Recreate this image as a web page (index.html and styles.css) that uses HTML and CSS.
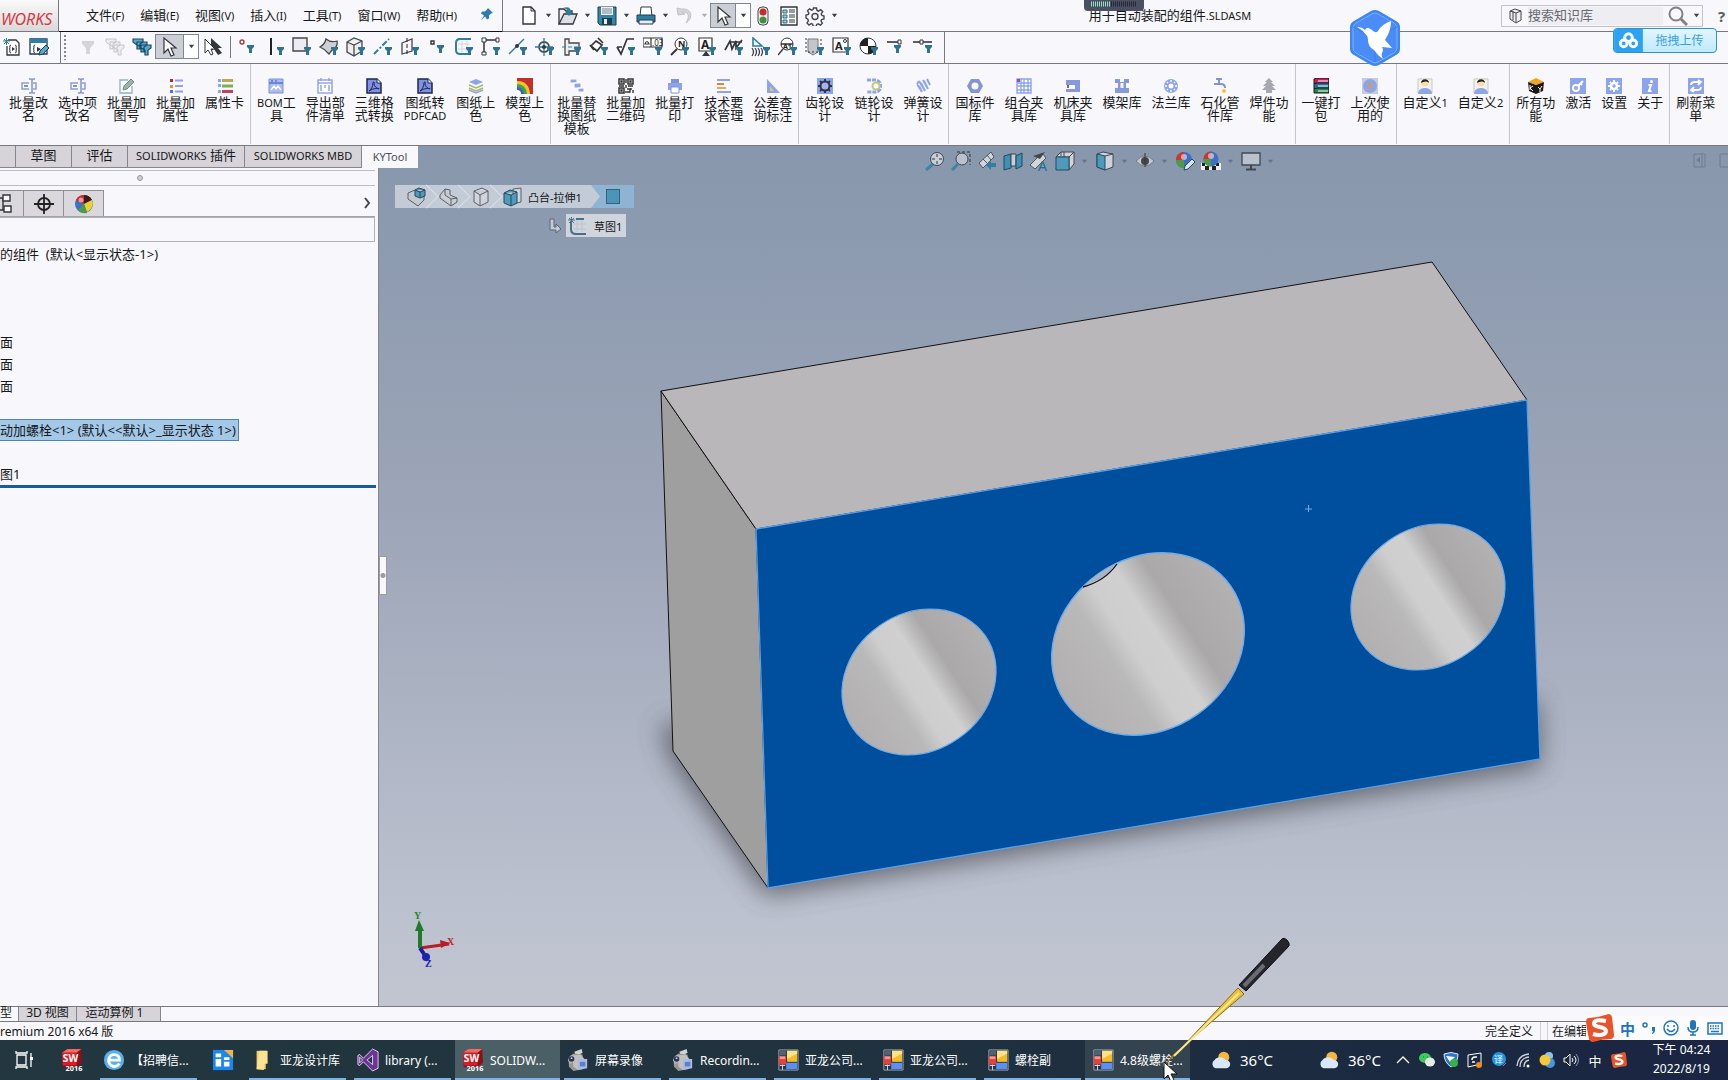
FILE: index.html
```html
<!DOCTYPE html>
<html lang="zh-CN">
<head>
    <meta charset="UTF-8">
    <meta name="viewport" content="width=device-width, initial-scale=1.0">
    <title>用于自动装配的组件.SLDASM</title>
    <link rel="stylesheet" href="styles.css">
</head>
<body>
    <!-- Shared icon shapes -->
    <svg class="sprite" aria-hidden="true">
        <symbol id="funnel" viewBox="0 0 20 20"><path d="M12 10h7v2l-2 2v4h-3v-4l-2-2z" fill="#2f7391"/></symbol>
        <symbol id="caret" viewBox="0 0 8 8"><path d="M1 2h6L4 6z" fill="#3c3f45"/></symbol>
        <symbol id="pointer" viewBox="0 0 20 20"><path d="M5 1v15l4-4 3 7 3-1-3-7h5z" fill="#fff" stroke="#33363b" stroke-width="1.2"/></symbol>
        <symbol id="rename" viewBox="0 0 16 16"><path d="M8 5H1v6h7M12 5h3v6h-3" fill="none" stroke="#8f9fd0" stroke-width="1.5"/><path d="M3 8h4" stroke="#76a877" stroke-width="2"/><path d="M8 1h2l1 1v12l-1 1H8M14 1h-2l-1 1v12l1 1h2" fill="none" stroke="#8095d6" stroke-width="1.5"/></symbol>
        <symbol id="pdf" viewBox="0 0 16 16"><path d="M1 1h10l4 4v10H1z" fill="#7d93e6" stroke="#20264f" stroke-width="1.5"/><path d="M11 1v4h4" fill="#fff" stroke="#20264f"/><path d="M3 13c2-1 4-5 4-8 0-2 2-1 1 1 0 2 3 5 5 5 1-1-6-1-10 2z" fill="none" stroke="#1c2048"/></symbol>
        <symbol id="person" viewBox="0 0 16 16"><path d="M1 1h14v14H1z" fill="#f4f2ef" stroke="#cbc7c0"/><circle cx="8" cy="5" r="3.5" fill="#f4dfae"/><path d="M4 5c0-5 8-5 8 0-2-2-5-2-8 0z" fill="#29231d"/><path d="M1 16c0-8 14-8 14 0z" fill="#8fa5e9"/></symbol>
        <symbol id="gear" viewBox="0 0 20 20"><path d="M8.500 2h3l.5 2.500 1.500.7 2.200-1.500 2 2-1.500 2.200.7 1.600 2.100.5v3l-2.400.5-.6 1.500 1.400 2.200-2 2-2.200-1.400-1.500.6-.5 2.100h-3l-.5-2.300-1.500-.6-2.200 1.400-2-2 1.400-2.200-.6-1.500L1 12v-3l2.300-.5.6-1.500-1.400-2.200 2-2 2.200 1.400 1.400-.6z" fill="none" stroke="#44474d" stroke-width="1.4"/><circle cx="10" cy="10.500" r="3" fill="none" stroke="#44474d" stroke-width="1.4"/></symbol>
        <symbol id="sw" viewBox="0 0 24 24"><path d="M1 4l6-4h15l1 15-6 5H2z" fill="#8c1017"/><path d="M1 4l6-4h15l-5 4z" fill="#f26a64"/><path d="M1 4h16v14H2z" fill="#d81d26"/><text x="2" y="14" font-size="11" font-weight="700" fill="#fff">SW</text><text x="5" y="24" font-size="8" font-weight="700" fill="#fff">2016</text></symbol>
        <symbol id="camera" viewBox="0 0 24 24"><path d="M8 3l8-3 1 4-7 4z" fill="#d5d3d0"/><path d="M2 9l5-4 10 1v16l-10 2-5-5z" fill="#9a9795"/><path d="M6 7l9-1 4 5v8l-7 4-5-4z" fill="#c2c0be"/><path d="M1 12l3-5 4-1-1 8-4 3z" fill="#b5b3b1"/><circle cx="5" cy="11" r="3" fill="#2e3556"/><circle cx="5" cy="10" r="1" fill="#b7cff5"/><path d="M12 11h10v10l-10 2z" fill="#a7bbe8"/><path d="M14 14h6v5h-6z" fill="#5f7fc4"/></symbol>
        <symbol id="blocks" viewBox="0 0 24 24"><path d="M2 1h21v22H2z" fill="#24354d" stroke="#a0a9b5"/><path d="M3 2h7v5H3z" fill="#55606e"/><path d="M11 2h11v12H11z" fill="#f4bd25"/><path d="M11 2h11v3L11 11z" fill="#ffe187"/><path d="M2 8h8v9H2z" fill="#e1423b"/><path d="M3 8h6v3H3z" fill="#f7978d"/><path d="M10 15h12v7H10z" fill="#5b8ff0"/><path d="M3 18h6M6 17v6" stroke="#ddd"/></symbol>
        <symbol id="cloud" viewBox="0 0 24 20"><circle cx="15" cy="7" r="6" fill="#f6b53c"/><path d="M6 19a5 5 0 0 1-1-9 7 6 0 0 1 12 0 4.500 4.500 0 0 1 1 9z" fill="#d9e8f8"/></symbol>
        <symbol id="sogou" viewBox="0 0 28 28"><path d="M3 4q11-1 20-4 2 0 3 3 1 9 2 18 0 3-3 4-9 0-18 3-3 0-4-3Q1 16 0 8q0-4 3-4z" fill="#ea5327"/><path d="M20 7q-11-2-12 2c-1 5 12 3 12 8 0 4-7 5-13 3" fill="none" stroke="#fff" stroke-width="4"/></symbol>
    </svg>

    <!-- Title bar -->
    <header class="title-bar">
        <div class="logo">WORKS</div>
        <nav class="menu">
            <button>文件<small>(F)</small></button>
            <button>编辑<small>(E)</small></button>
            <button>视图<small>(V)</small></button>
            <button>插入<small>(I)</small></button>
            <button>工具<small>(T)</small></button>
            <button>窗口<small>(W)</small></button>
            <button>帮助<small>(H)</small></button>
            <button class="pin" aria-label="固定"><svg class="i16" viewBox="0 0 16 16"><path d="M9 2l5 5-2 .5-2 2 0 3-2 1-2-3-4 4 3-5-3-2 1-2h3l2-2z" fill="#2c7cb0"/></svg></button>
        </nav>
        <div class="quick">
            <button aria-label="新建"><svg class="i20" viewBox="0 0 20 20"><path d="M4 1h8l4 4v13H4z" fill="#fff" stroke="#33363b" stroke-width="1.4"/><path d="M12 1v4h4" fill="none" stroke="#33363b"/></svg></button>
            <button class="caret" aria-label="新建选项"><svg viewBox="0 0 8 8"><use href="#caret"/></svg></button>
            <button aria-label="打开"><svg class="i20" viewBox="0 0 20 20"><path d="M1 18V3h5l2 2h6v4" fill="#eee" stroke="#33363b" stroke-width="1.3"/><path d="M1 18L6 8h13l-4 10z" fill="#dedfe2" stroke="#33363b" stroke-width="1.3"/><path d="M5 2c5-2 8 0 8 4h2l-4 4-4-4h3c0-2-1-3-5-4z" fill="#2d7fa3"/></svg></button>
            <button class="caret" aria-label="打开选项"><svg viewBox="0 0 8 8"><use href="#caret"/></svg></button>
            <button aria-label="保存"><svg class="i20" viewBox="0 0 20 20"><path d="M1 1h18v18H3l-2-2z" fill="#3585a8" stroke="#1e3c50"/><path d="M4 1h12v8H4z" fill="#e9eef1"/><path d="M5 3h10M5 5h10M5 7h10" stroke="#7e8b93"/><path d="M5 12h10v7H5z" fill="#1e3c50"/><path d="M7 13h3v5H7z" fill="#e9eef1"/></svg></button>
            <button class="caret" aria-label="保存选项"><svg viewBox="0 0 8 8"><use href="#caret"/></svg></button>
            <button aria-label="打印"><svg class="i20" viewBox="0 0 20 20"><path d="M5 1h10l1 9H4z" fill="#fff" stroke="#33363b"/><path d="M1 9h18v7H1z" fill="#2d7fa3" stroke="#1e3c50"/><path d="M3 14h14v4H3z" fill="#e8eef1" stroke="#1e3c50"/></svg></button>
            <button class="caret" aria-label="打印选项"><svg viewBox="0 0 8 8"><use href="#caret"/></svg></button>
            <button aria-label="撤消"><svg class="i20" viewBox="0 0 20 20"><path d="M2 2l1 7 7-1-3-2c5-1 9 3 4 11 8-6 6-15-5-14z" fill="#d5d4d9" stroke="#c2c1c7"/></svg></button>
            <button class="caret faded" aria-label="撤消选项"><svg viewBox="0 0 8 8"><use href="#caret"/></svg></button>
            <div class="split">
                <button class="on" aria-label="选择"><svg class="i20"><use href="#pointer"/></svg></button>
                <button class="caret" aria-label="选择选项"><svg viewBox="0 0 8 8"><use href="#caret"/></svg></button>
            </div>
            <button class="spaced" aria-label="重建模型"><svg class="i20" viewBox="0 0 20 20"><rect x="5" y="1" width="10" height="18" rx="4" fill="#eee" stroke="#44474d"/><circle cx="10" cy="6" r="3.500" fill="#c72a2a"/><circle cx="10" cy="14" r="3.500" fill="#3c9040"/></svg></button>
            <button class="spaced" aria-label="文件属性"><svg class="i20" viewBox="0 0 20 20"><path d="M2 1h16v18H2z" fill="#fff" stroke="#33363b" stroke-width="1.4"/><path d="M4 4h4v3H4zM4 9h4v3H4zM4 14h4v3H4z" fill="#9cc9dd" stroke="#2d6a8a"/><path d="M10 4h6M10 6h6M10 9h6M10 11h6M10 14h6M10 16h6" stroke="#33363b"/></svg></button>
            <button aria-label="选项"><svg class="i20"><use href="#gear"/></svg></button>
            <button class="caret" aria-label="更多选项"><svg viewBox="0 0 8 8"><use href="#caret"/></svg></button>
        </div>
        <div class="doc-name">用于自动装配的组件<small>.SLDASM</small></div>
        <div class="search">
            <svg class="i16" viewBox="0 0 16 16"><path d="M3 3l5-2 6 2v9l-5 3-6-4z" fill="#eee" stroke="#44474d"/><path d="M6 3v9M9 5v9M3 3l6 2 5-2" fill="none" stroke="#44474d"/></svg>
            <input type="text" aria-label="搜索知识库" placeholder="搜索知识库">
            <button aria-label="搜索"><svg class="i20" viewBox="0 0 20 20"><circle cx="8" cy="8" r="6.500" fill="none" stroke="#808287" stroke-width="2"/><path d="M13 13l6 6" stroke="#808287" stroke-width="3"/></svg></button>
            <button class="caret" aria-label="搜索范围"><svg viewBox="0 0 8 8"><use href="#caret"/></svg></button>
        </div>
        <button class="help">?</button>
    </header>

    <!-- Selection filter toolbar -->
    <div class="filter-bar">
        <div class="macro">
            <button aria-label="新建宏"><svg class="i20" viewBox="0 0 20 20"><path d="M6 3h8l3 3v12H5V9" fill="#fff" stroke="#33363b" stroke-width="1.3"/><path d="M1 4h7M4.500 1v7M2 2l5 5M7 2L2 7" stroke="#2d7fa3"/><path d="M9 8q-2 0-1 3 0 1-1 1 1 0 1 1-1 3 1 3M13 8q2 0 1 3 0 1 1 1-1 0-1 1 1 3-1 3" fill="none" stroke="#33363b"/><path d="M10 10l3 2-3 2z" fill="#33363b"/></svg></button>
            <button aria-label="编辑宏"><svg class="i20" viewBox="0 0 20 20"><path d="M1 2h17v15H1z" fill="#fff" stroke="#1e3c50" stroke-width="1.300"/><path d="M1 2h17v4H1z" fill="#2d7fa3"/><path d="M6 8q-2 0-1 3 0 1-1 1 1 0 1 1-1 3 1 3" fill="none" stroke="#33363b"/><path d="M8 10l4 2-4 3z" fill="#33363b"/><path d="M10 18l1-4 6-6 3 3-6 6z" fill="#5aa7cb" stroke="#1e3c50"/></svg></button>
        </div>
        <div class="filters">
            <span class="grip"></span>
            <button aria-label="清除过滤"><svg class="i20" viewBox="0 0 20 20"><path d="M4 4h12v3l-4 4v6H8v-6L4 7z" fill="#d5d4d9"/></svg></button>
            <button aria-label="全部过滤"><svg class="i20" viewBox="0 0 20 20"><path d="M1 2h10v3l-3 2v5H5V8L1 5zM5 5h10v3l-3 2v5H9v-5L5 8zM9 8h10v3l-3 2v5h-3v-5l-4-2z" fill="#eeedf1" stroke="#c6c5cb"/></svg></button>
            <button aria-label="过滤器"><svg class="i20" viewBox="0 0 20 20"><path d="M1 2h10v3l-3 2v5H5V8L1 5zM5 5h10v3l-3 2v5H9v-5L5 8zM9 8h10v3l-3 2v5h-3v-5l-4-2z" fill="#55a9cb" stroke="#1b4a63" stroke-width="1.200"/></svg></button>
            <div class="split">
                <button class="on" aria-label="选择"><svg class="i20"><use href="#pointer"/></svg></button>
                <button class="caret" aria-label="选择选项"><svg viewBox="0 0 8 8"><use href="#caret"/></svg></button>
            </div>
            <button aria-label="反向选择"><svg class="i20" viewBox="0 0 20 20"><path d="M8 1v13l3-2 4 6 4-2-4-5h4z" fill="#33363b"/><path d="M2 2v14l3-3 3 5 2-1-2-5h4z" fill="#fff" stroke="#33363b"/></svg></button>
            <span class="divider"></span>
            <button aria-label="过滤顶点"><svg class="i20" viewBox="0 0 20 20"><circle cx="4" cy="5" r="2" fill="#fff" stroke="#a3403c" stroke-width="1.400"/><use href="#funnel" x="-3" y="-2" width="20" height="20"/></svg></button>
            <button aria-label="过滤边线"><svg class="i20" viewBox="0 0 20 20"><path d="M6 1v17" stroke="#222" stroke-width="2"/><use href="#funnel" width="20" height="20"/></svg></button>
            <button aria-label="过滤面"><svg class="i20" viewBox="0 0 20 20"><path d="M1 1h14v13H1z" fill="#ecebef" stroke="#44474d" stroke-width="1.400"/><use href="#funnel" width="20" height="20"/></svg></button>
            <button aria-label="过滤曲面"><svg class="i20" viewBox="0 0 20 20"><path d="M1 10q5-3 6-8 5 4 11 2 1 6-4 8-2 2-4 5-4-5-9-7z" fill="#cfd0d4" stroke="#44474d" stroke-width="1.300"/><use href="#funnel" width="20" height="20"/></svg></button>
            <button aria-label="过滤实体"><svg class="i20" viewBox="0 0 20 20"><path d="M1 5l7-4 8 3v10l-8 5-7-4zM1 5l7 3 8-4M8 8v11" fill="#eee" stroke="#44474d" stroke-width="1.300"/><use href="#funnel" width="20" height="20"/></svg></button>
            <button aria-label="过滤基准轴"><svg class="i20" viewBox="0 0 20 20"><path d="M1 17L16 2" stroke="#2d7fa3" stroke-width="2" stroke-dasharray="6 2 2 2"/><use href="#funnel" width="20" height="20"/></svg></button>
            <button aria-label="过滤基准面"><svg class="i20" viewBox="0 0 20 20"><path d="M2 6l10-4v12L2 17z" fill="none" stroke="#44474d" stroke-width="1.300"/><path d="M7 1v18" stroke="#222" stroke-dasharray="4 2"/><use href="#funnel" width="20" height="20"/></svg></button>
            <button aria-label="过滤草图点"><svg class="i20" viewBox="0 0 20 20"><path d="M4 4h3v3H4z" fill="#fff" stroke="#33363b" stroke-width="1.400"/><use href="#funnel" x="-2" y="-2" width="20" height="20"/></svg></button>
            <button aria-label="过滤草图"><svg class="i20" viewBox="0 0 20 20"><path d="M17 2H6q-4 0-4 4v7q0 4 4 4h8" fill="none" stroke="#2d7fa3" stroke-width="2"/><path d="M4 7h12M4 12h12M8 4v12M13 4v12" stroke="#d4d7dd"/><use href="#funnel" width="20" height="20"/></svg></button>
            <button aria-label="过滤草图线段"><svg class="i20" viewBox="0 0 20 20"><path d="M3 17V3h14" fill="none" stroke="#33363b" stroke-width="1.500"/><path d="M1 15h4v3H1zM1 1h4v4H1zM15 1h3v4h-3z" fill="#fff" stroke="#33363b"/><use href="#funnel" width="20" height="20"/></svg></button>
            <button aria-label="过滤中点"><svg class="i20" viewBox="0 0 20 20"><path d="M1 17L16 2" stroke="#2d7fa3" stroke-width="1.500"/><circle cx="9" cy="9" r="2" fill="#33363b"/><use href="#funnel" width="20" height="20"/></svg></button>
            <button aria-label="过滤中心符号线"><svg class="i20" viewBox="0 0 20 20"><circle cx="9" cy="10" r="5" fill="none" stroke="#44474d" stroke-width="1.800"/><path d="M9 1v18M0 10h18" stroke="#2d7fa3" stroke-width="1.300"/><circle cx="9" cy="10" r="2" fill="#33363b"/><use href="#funnel" width="20" height="20"/></svg></button>
            <button aria-label="过滤中心线"><svg class="i20" viewBox="0 0 20 20"><path d="M3 2h4v4h10v8H7v4H3z" fill="#eee" stroke="#44474d" stroke-width="1.300"/><path d="M0 10h19" stroke="#2d7fa3" stroke-dasharray="4 2"/><use href="#funnel" width="20" height="20"/></svg></button>
            <button aria-label="过滤尺寸"><svg class="i20" viewBox="0 0 20 20"><path d="M7 4l6 4-5 6-6-5zM1 8l4 5M9 1l5 5" fill="#fff" stroke="#33363b" stroke-width="1.700"/><use href="#funnel" width="20" height="20"/></svg></button>
            <button aria-label="过滤表面粗糙度"><svg class="i20" viewBox="0 0 20 20"><path d="M1 10h5M1 10l4 7 6-15h7" fill="none" stroke="#33363b" stroke-width="1.700"/><use href="#funnel" width="20" height="20"/></svg></button>
            <button aria-label="过滤形位公差"><svg class="i20" viewBox="0 0 20 20"><path d="M0 1h19v9H0zM8 1v9M2 7q2-5 4 0z" fill="#fff" stroke="#33363b" stroke-width="1.200"/><text x="9" y="9" font-size="8" fill="#222">.03</text><use href="#funnel" width="20" height="20"/></svg></button>
            <button aria-label="过滤零件序号"><svg class="i20" viewBox="0 0 20 20"><circle cx="11" cy="7" r="6" fill="#fff" stroke="#33363b"/><path d="M7 12l-6 6" stroke="#33363b" stroke-width="2"/><text x="8" y="10" font-size="9" font-weight="700" fill="#222">N</text><use href="#funnel" width="20" height="20"/></svg></button>
            <button aria-label="过滤注释"><svg class="i20" viewBox="0 0 20 20"><path d="M2 1h13v13H2z" fill="#fff" stroke="#33363b" stroke-width="1.200"/><path d="M5 19l4-5 4 5z" fill="#33363b"/><text x="4" y="12" font-size="12" font-weight="700" fill="#222">A</text><use href="#funnel" width="20" height="20"/></svg></button>
            <button aria-label="过滤焊接符号"><svg class="i20" viewBox="0 0 20 20"><path d="M1 13l5-9 2 8 4-8v7l6-8M5 5h13" fill="none" stroke="#33363b" stroke-width="1.700"/><use href="#funnel" width="20" height="20"/></svg></button>
            <button aria-label="过滤焊缝"><svg class="i20" viewBox="0 0 20 20"><path d="M2 1v8h9z" fill="none" stroke="#2d7fa3" stroke-width="1.600"/><path d="M1 11q3 4 0 8M4 11q3 4 0 8M7 11q3 4 0 8M10 11q3 4 0 8" fill="none" stroke="#33363b" stroke-width="1.200"/><use href="#funnel" width="20" height="20"/></svg></button>
            <button aria-label="过滤基准目标"><svg class="i20" viewBox="0 0 20 20"><circle cx="9" cy="7" r="6" fill="#fff" stroke="#33363b"/><path d="M3 7h12M5 12l-5 6" stroke="#33363b" stroke-width="1.400"/><text x="5" y="12" font-size="7" font-weight="700" fill="#222">A1</text><use href="#funnel" width="20" height="20"/></svg></button>
            <button aria-label="过滤装饰螺纹线"><svg class="i20" viewBox="0 0 20 20"><path d="M3 2h10v13l-5 3-5-3z" fill="#c4c5ca" stroke="#777a80"/><path d="M1 1v14h15V1" fill="none" stroke="#33363b" stroke-dasharray="2 2"/><use href="#funnel" width="20" height="20"/></svg></button>
            <button aria-label="过滤块"><svg class="i20" viewBox="0 0 20 20"><path d="M1 1h15v14H1z" fill="#fff" stroke="#33363b" stroke-width="1.200"/><text x="3" y="13" font-size="11" font-weight="700" fill="#222">A</text><circle cx="13" cy="4" r="1.500" fill="none" stroke="#33363b"/><use href="#funnel" width="20" height="20"/></svg></button>
            <button aria-label="过滤质心"><svg class="i20" viewBox="0 0 20 20"><circle cx="9" cy="9" r="8" fill="#fff" stroke="#33363b"/><path d="M9 9V1a8 8 0 0 0-8 8zM9 9v8a8 8 0 0 0 8-8z" fill="#222"/><use href="#funnel" width="20" height="20"/></svg></button>
            <button aria-label="过滤连接点"><svg class="i20" viewBox="0 0 20 20"><path d="M1 5h12" stroke="#33363b" stroke-width="1.600"/><path d="M12 3h3v4h-3z" fill="#fff" stroke="#33363b"/><use href="#funnel" x="-4" y="-2" width="20" height="20"/></svg></button>
            <button aria-label="过滤步路点"><svg class="i20" viewBox="0 0 20 20"><path d="M0 5h19" stroke="#33363b" stroke-width="1.600"/><path d="M7 3h3v4H7z" fill="#fff" stroke="#33363b"/><use href="#funnel" y="-2" width="20" height="20"/></svg></button>
        </div>
    </div>

    <!-- KYTool ribbon -->
    <div class="ribbon">
        <div class="group">
            <button><svg class="i16"><use href="#rename"/></svg>批量改<br>名</button>
            <button><svg class="i16"><use href="#rename"/></svg>选中项<br>改名</button>
            <button><svg class="i16" viewBox="0 0 16 16"><path d="M9 2H1v13h12V8" fill="#fff" stroke="#8ab2cf" stroke-width="1.300"/><path d="M4 12l1-4 7-7 3 3-7 7z" fill="#9db4a6" stroke="#6f8b80"/></svg>批量加<br>图号</button>
            <button><svg class="i16" viewBox="0 0 16 16"><path d="M2 1h3v3H2z" fill="#b42b2b"/><path d="M2 7h3v3H2z" fill="#e0952c"/><path d="M2 12h3v3H2z" fill="#5272d6"/><path d="M7 2.500h8M7 8h8M7 13.500h8" stroke="#8ea4ea" stroke-width="2"/></svg>批量加<br>属性</button>
            <button><svg class="i16" viewBox="0 0 16 16"><path d="M1 1h3v3H1zM1 6h3v3H1zM1 12h3v3H1z" fill="#8ea4ea"/><path d="M5 2.500h11" stroke="#b3aa52" stroke-width="3"/><path d="M5 8h11" stroke="#7fae55" stroke-width="3"/><path d="M5 13.500h11" stroke="#c0405d" stroke-width="3"/></svg>属性卡</button>
        </div>
        <div class="group">
            <button><svg class="i16" viewBox="0 0 16 16"><path d="M1 1h14v14H1z" fill="#a8bbf2" stroke="#7d93de"/><path d="M1 5h14M3 3h2M7 3h2" stroke="#5e77cf" stroke-width="1.500"/><path d="M3 12l3-4 2 3 2-3 3 4" fill="none" stroke="#fff" stroke-width="1.500"/></svg><span><small>BOM</small>工</span>具</button>
            <button><svg class="i16" viewBox="0 0 16 16"><path d="M1 2h14v13H1zM1 5h14" fill="#fff" stroke="#93a6e6" stroke-width="1.500"/><path d="M4 7v6M8 7v3M12 7v6M4 0v3M12 0v3" stroke="#93a6e6" stroke-width="1.500"/></svg>导出部<br>件清单</button>
            <button><svg class="i16"><use href="#pdf"/></svg>三维格<br>式转换</button>
            <button><svg class="i16"><use href="#pdf"/></svg>图纸转<small>PDFCAD</small></button>
            <button><svg class="i16" viewBox="0 0 16 16"><path d="M8 1l7 3-7 3-7-3z" fill="#8ea4ea"/><path d="M1 7l7 3 7-3M1 10l7 3 7-3" fill="none" stroke="#a7b66c" stroke-width="1.600"/><path d="M1 12l7 3 7-3" fill="none" stroke="#8ea4ea" stroke-width="1.600"/></svg>图纸上<br>色</button>
            <button><svg class="i16" viewBox="0 0 16 16"><path d="M0 0h16v16H0z" fill="#c3302b"/><path d="M0 3q12 0 13 13H0z" fill="#f0c52b"/><path d="M0 6q9 0 10 10H0z" fill="#43a343"/><path d="M0 9q6 0 7 7H0z" fill="#3865c4"/><path d="M0 12q4 0 4 4H0z" fill="#fff"/></svg>模型上<br>色</button>
        </div>
        <div class="group">
            <button><svg class="i16" viewBox="0 0 16 16"><path d="M1 1h7v4H1zM5 5h7v5H5zM9 10h6v4H9z" fill="#8ea4ea" stroke="#fff"/></svg>批量替<br>换图纸<br>模板</button>
            <button><svg class="i16" viewBox="0 0 16 16"><path d="M1 1h5v5H1zM10 1h5v5h-5zM1 10h5v5H1z" fill="none" stroke="#333" stroke-width="1.500"/><path d="M3 3h1v1H3zM12 3h1v1h-1zM3 12h1v1H3zM8 1v4M8 7v3M1 8h5M10 8h5M9 11h3v3H9M13 10v2M15 12v3M8 13v2" fill="none" stroke="#333" stroke-width="1.400"/></svg>批量加<br>二维码</button>
            <button><svg class="i16" viewBox="0 0 16 16"><path d="M4 1h8v4H4z" fill="#7f94d8"/><path d="M1 5h14v7H1z" fill="#8ea4ea"/><path d="M4 9h8v6H4z" fill="#fff" stroke="#7f94d8"/></svg>批量打<br>印</button>
            <button><svg class="i16" viewBox="0 0 16 16"><path d="M1 2h13" stroke="#8ea4ea" stroke-width="2"/><path d="M1 6h7" stroke="#d98532" stroke-width="2"/><path d="M1 10h9" stroke="#e0b042" stroke-width="2"/><path d="M1 14h14" stroke="#8ea4ea" stroke-width="2"/></svg>技术要<br>求管理</button>
            <button><svg class="i16" viewBox="0 0 16 16"><path d="M2 1l13 14H2z" fill="#8ea4ea"/><path d="M5 8l4 5H5z" fill="#d9cb63"/></svg>公差查<br>询标注</button>
        </div>
        <div class="group">
            <button><svg class="i16" viewBox="0 0 16 16"><path d="M0 0h16v16H0z" fill="#8ea4ea"/><circle cx="8" cy="8" r="4.500" fill="#a5b6ee" stroke="#2f3344" stroke-width="2"/><path d="M8 1v3M8 12v3M1 8h3M12 8h3M3 3l2 2M11 11l2 2M13 3l-2 2M3 13l2-2" stroke="#2f3344" stroke-width="1.800"/></svg>齿轮设<br>计</button>
            <button><svg class="i16" viewBox="0 0 16 16"><path d="M1 2h8a6 6 0 0 1 0 12H1" fill="none" stroke="#8ea4ea" stroke-width="3" stroke-dasharray="4 1"/><circle cx="10" cy="8" r="3.500" fill="#fff" stroke="#c1c77d" stroke-width="2"/></svg>链轮设<br>计</button>
            <button><svg class="i16" viewBox="0 0 16 16"><path d="M2 6l5 8M4 3l6 10M8 2l5 9M12 1l3 6M2 6l2-3M7 14l-3-6M10 13L6 5M13 11L9 3" fill="none" stroke="#8ea4ea" stroke-width="2"/></svg>弹簧设<br>计</button>
        </div>
        <div class="group">
            <button><svg class="i16" viewBox="0 0 16 16"><path d="M4 1h8l4 7-4 7H4L0 8z" fill="#8595cf"/><circle cx="8" cy="8" r="3.500" fill="#f8f7fb"/></svg>国标件<br>库</button>
            <button><svg class="i16" viewBox="0 0 16 16"><path d="M1 1h14v14H1zM5 1v14M8 1v14M12 1v14M1 5h14M1 8h14M1 12h14" fill="#fff" stroke="#8ea4ea" stroke-width="1.400"/><path d="M1 1h3v3H1z" fill="#9a4ea8"/></svg>组合夹<br>具库</button>
            <button><svg class="i16" viewBox="0 0 16 16"><path d="M1 2h14v12H1v-3h9V7H1z" fill="#8699dc"/><path d="M3 7v3" stroke="#b64f4f" stroke-width="2"/></svg>机床夹<br>具库</button>
            <button><svg class="i16" viewBox="0 0 16 16"><path d="M1 1h5v3h4V1h5v4h-3v5h3v5H1v-5h3V5H1z" fill="#8699dc"/><path d="M8 5v5" stroke="#f8f7fb" stroke-width="3"/></svg>模架库</button>
            <button><svg class="i16" viewBox="0 0 16 16"><circle cx="8" cy="8" r="7" fill="#8ea4ea"/><circle cx="8" cy="8" r="2.500" fill="#fff"/><path d="M8 2v2M8 12v2M2 8h2M12 8h2M4 4l1 1M11 11l1 1M12 4l-1 1M4 12l1-1" stroke="#fff" stroke-width="1.400"/></svg>法兰库</button>
            <button><svg class="i16" viewBox="0 0 16 16"><path d="M4 1h6M7 1v4M2 6h7q4 0 4 4" fill="none" stroke="#7f94d8" stroke-width="2"/><circle cx="12" cy="13" r="2" fill="#e6ce3c"/></svg>石化管<br>件库</button>
            <button><svg class="i16" viewBox="0 0 16 16"><path d="M8 0l4 4h-2l4 4h-3l4 4h-4v3H5v-3H1l4-4H2l4-4H4z" fill="#a6a9b2"/></svg>焊件功<br>能</button>
        </div>
        <div class="group">
            <button><svg class="i16" viewBox="0 0 16 16"><path d="M1 1l3-1h12v5l-2 1H1z" fill="#c0215e" stroke="#2b1111"/><path d="M1 6l3-1h12v5l-2 1H1z" fill="#2670a5" stroke="#101c2b"/><path d="M1 11l3-1h12v5H1z" fill="#27824c" stroke="#0e2015"/><path d="M5 3h10M5 8h10M5 13h10" stroke="#fff"/></svg>一键打<br>包</button>
            <button><svg class="i16" viewBox="0 0 16 16"><path d="M0 0h16v16H0z" fill="#c5ccdf"/><circle cx="8" cy="8" r="7" fill="#8ea4ea"/><path d="M8 4v8" stroke="#e39a3c" stroke-width="2"/></svg>上次使<br>用的</button>
        </div>
        <div class="group">
            <button><svg class="i16"><use href="#person"/></svg><span>自定义<small>1</small></span></button>
            <button><svg class="i16"><use href="#person"/></svg><span>自定义<small>2</small></span></button>
        </div>
        <div class="group">
            <button><svg class="i16" viewBox="0 0 16 16"><path d="M0 4l8-4 8 4-8 3z" fill="#f2a31f"/><path d="M0 4l8 3v9l-7-3zM16 4L8 7v9l7-3z" fill="#1c1712"/><path d="M2 7v5M5 8l-3 2 3 3M10 9l2 2 2-3M12 11v3" fill="none" stroke="#fff"/></svg>所有功<br>能</button>
            <button><svg class="i16" viewBox="0 0 16 16"><path d="M0 0h16v16H0z" fill="#8ea4ea"/><circle cx="6" cy="10" r="3" fill="none" stroke="#fff" stroke-width="2"/><path d="M8 8l5-5M10 5l2 2" stroke="#fff" stroke-width="2"/></svg>激活</button>
            <button><svg class="i16" viewBox="0 0 16 16"><path d="M0 0h16v16H0z" fill="#8ea4ea"/><circle cx="8" cy="8" r="3" fill="none" stroke="#fff" stroke-width="2.500"/><path d="M8 2v2M8 12v2M2 8h2M12 8h2M4 4l1 1M11 11l1 1M12 4l-1 1M4 12l1-1" stroke="#fff" stroke-width="2"/></svg>设置</button>
            <button><svg class="i16" viewBox="0 0 16 16"><path d="M0 0h16v16H0z" fill="#8ea4ea"/><circle cx="9.500" cy="3.500" r="1.500" fill="#fff"/><path d="M6.500 7H9l-2 6h2.500" fill="none" stroke="#fff" stroke-width="2"/></svg>关于</button>
        </div>
        <div class="group">
            <button><svg class="i16" viewBox="0 0 16 16"><path d="M0 0h16v16H0z" fill="#8ea4ea"/><path d="M3 7q0-3 4-3h5M10 2l3 2-3 3M13 9q0 3-4 3H4M6 9l-3 3 3 2" fill="none" stroke="#fff" stroke-width="1.800"/></svg>刷新菜<br>单</button>
        </div>
    </div>

    <main class="workspace">
        <!-- Feature manager -->
        <section class="side">
            <div class="tabs">
                <button class="cut" aria-label="装配体"></button>
                <button>草图</button>
                <button>评估</button>
                <button class="long"><small>SOLIDWORKS</small> 插件</button>
                <button class="long"><small>SOLIDWORKS MBD</small></button>
                <button class="current"><small>KYTool</small></button>
            </div>
            <div class="panel">
                <div class="handle"><i></i></div>
                <div class="panel-tabs">
                    <button class="cut" aria-label="配置"><svg class="i20" viewBox="5 0 20 20"><path d="M0 4h8v12H0M8 4h3M8 16h3" fill="none" stroke="#33363b" stroke-width="1.400"/><path d="M8 1h7v6H8zM9 12h7v6H9z" fill="#fff" stroke="#33363b" stroke-width="1.400"/></svg></button>
                    <button aria-label="尺寸专家"><svg class="i20" viewBox="0 0 20 20"><circle cx="10" cy="10" r="6" fill="none" stroke="#222" stroke-width="1.800"/><path d="M10 0v20M0 10h20" stroke="#222" stroke-width="1.800"/></svg></button>
                    <button aria-label="外观"><svg class="i20" viewBox="0 0 20 20"><circle cx="10" cy="10" r="9" fill="#3f6fc4"/><path d="M10 10L2 6a9 9 0 0 1 8-5z" fill="#cf2626"/><path d="M10 10V1a9 9 0 0 1 8 5z" fill="#3b1a18"/><path d="M10 10l8-4a9 9 0 0 1-5 12z" fill="#eccf31"/><path d="M10 10l3 9a9 9 0 0 1-9-3z" fill="#4a9c48"/><circle cx="7" cy="6" r="2.500" fill="#ffffff88"/></svg></button>
                    <button class="more" aria-label="展开"><svg viewBox="0 0 8 12"><path d="M2 1l4 5-4 5" fill="none" stroke="#44474d" stroke-width="2"/></svg></button>
                </div>
                <input class="filter-box" type="text" aria-label="过滤设计树">
                <ul class="tree">
                    <li>的组件&nbsp; (默认&lt;显示状态-1&gt;)</li>
                    <li></li>
                    <li></li>
                    <li></li>
                    <li>面</li>
                    <li>面</li>
                    <li>面</li>
                    <li></li>
                    <li><span class="selected">动加螺栓&lt;1&gt; (默认&lt;&lt;默认&gt;_显示状态 1&gt;)</span></li>
                    <li></li>
                    <li>图1</li>
                </ul>
            </div>
        </section>

        <!-- Graphics area -->
        <section class="view">
            <svg class="scene" viewBox="379 146 1349 860">
                <defs>
                    <linearGradient id="bore" gradientUnits="userSpaceOnUse" x1="-95" y1="-3" x2="95" y2="3">
                        <stop offset="0" stop-color="#b2b0b1"/>
                        <stop offset=".3" stop-color="#bab9ba"/>
                        <stop offset=".42" stop-color="#cececf"/>
                        <stop offset=".57" stop-color="#d0d0d1"/>
                        <stop offset=".72" stop-color="#aaa8a9"/>
                        <stop offset="1" stop-color="#b2b0b1"/>
                    </linearGradient>
                    <filter id="soft" x="-20%" y="-20%" width="140%" height="140%"><feGaussianBlur stdDeviation="13"/></filter>
                </defs>
                <!-- Block -->
                <path d="M660 725L672 760 766 895 1540 766 1538 700z" fill="#4d4f56" opacity=".8" filter="url(#soft)"/>
                <path d="M661 391L756 529 768 888 673 751z" fill="#a09fa0" stroke="#111"/>
                <path d="M661 391L1432 262 1527 400 756 529z" fill="#b9b7b9" stroke="#111"/>
                <path d="M756 529L1527 400 1540 759 768 888z" fill="#004f9f" stroke="#5b9fe3" stroke-width="1.300"/>
                <g fill="url(#bore)" stroke="#6fabe6" stroke-width="1.500">
                    <ellipse rx="101" ry="86" transform="translate(919 682) scale(.8) rotate(-35)"/>
                    <ellipse rx="101" ry="86" transform="translate(1148 644) rotate(-35)"/>
                    <ellipse rx="101" ry="86" transform="translate(1428 597) scale(.8) rotate(-35)"/>
                </g>
                <path d="M1083 587q14-15 34-23-10 17-34 23z" fill="#a9b4c6"/>
                <path d="M1083 587q22-6 34-23" fill="none" stroke="#111" stroke-width="1.300"/>
                <path d="M1305 509h7M1308.500 505v7" stroke="#6fabe6"/>
                <!-- Triad -->
                <path d="M420 948l29-4" stroke="#b81e26" stroke-width="3"/>
                <path d="M440 940l10 3-9 5z" fill="#b81e26"/>
                <path d="M420 948v-20" stroke="#1f7a2a" stroke-width="4"/>
                <path d="M419 920l5 11h-9z" fill="#1f7a2a"/>
                <path d="M420 948l4 6" stroke="#1a1f9c" stroke-width="4"/>
                <circle cx="426" cy="957" r="4" fill="#1c22b4"/>
                <g class="axis"><text x="414" y="919" fill="#1f8a2c">Y</text><text x="447" y="945" fill="#c8202a">X</text><text x="425" y="967" fill="#1c22b4">Z</text></g>
            </svg>
            <span class="splitter"></span>
            <div class="view-bar">
                <button aria-label="整屏显示全图"><svg class="i20" viewBox="0 0 20 20"><path d="M8 13l-7 6" stroke="#3d84a5" stroke-width="3"/><circle cx="12" cy="8" r="6.500" fill="#c8ced7" stroke="#42484f"/><path d="M12 3v10M7 8h10" stroke="#333" stroke-dasharray="3 4"/></svg></button>
                <button aria-label="局部放大"><svg class="i20" viewBox="0 0 20 20"><path d="M7 13l-6 6" stroke="#3d84a5" stroke-width="3"/><path d="M6 1h13v13" fill="none" stroke="#333" stroke-dasharray="3 2"/><circle cx="11" cy="8" r="6" fill="#b8c1cc" stroke="#42484f"/></svg></button>
                <button aria-label="上一视图"><svg class="i20" viewBox="0 0 20 20"><path d="M2 12L14 1l3 5-11 11z" fill="#d1d5da" stroke="#50565e"/><path d="M6 8l5 5M10 4l4 5" stroke="#50565e"/><path d="M9 14l5-4v2h5v4h-5v3z" fill="#2d7fa3"/></svg></button>
                <button aria-label="剖面视图"><svg class="i20" viewBox="0 0 20 20"><path d="M1 5l7-2v14l-7 2z" fill="#3d91b5" stroke="#26495c"/><path d="M8 3h5v12H8z" fill="#c9ced5" stroke="#44474d"/><path d="M13 5l6-3v13l-6 3z" fill="#3d91b5" stroke="#26495c"/></svg></button>
                <button aria-label="动态注解视图"><svg class="i20" viewBox="0 0 20 20"><path d="M1 14L13 2l4 5-11 11z" fill="#d1d5da" stroke="#50565e"/><path d="M4 5l12-4-5 7z" fill="#44474d"/><text x="9" y="20" font-size="14" fill="#256f94">A</text></svg></button>
                <button aria-label="视图定向"><svg class="i20" viewBox="0 0 20 20"><path d="M6 1h13v12l-5 6V6H1l5-5zM6 1v4M14 6l5-5M9 1v5" fill="#d1d5da" stroke="#44474d"/><path d="M1 6h13v13H1z" fill="#4e9abb" stroke="#26495c"/></svg></button>
                <button class="caret faded" aria-label="视图定向选项"><svg viewBox="0 0 8 8"><use href="#caret"/></svg></button>
                <button aria-label="显示样式"><svg class="i20" viewBox="0 0 20 20"><path d="M2 3l6-2 10 2v13l-8 3-8-3z" fill="#ccd2d9" stroke="#44474d"/><path d="M2 3l8 2v14l-8-3z" fill="#4e9abb" stroke="#26495c"/><path d="M10 5l8-2" stroke="#44474d"/></svg></button>
                <button class="caret faded" aria-label="显示样式选项"><svg viewBox="0 0 8 8"><use href="#caret"/></svg></button>
                <button aria-label="隐藏项目"><svg class="i20" viewBox="0 0 20 20"><path d="M1 10q9-10 18 0-9 10-18 0z" fill="#c5c9cf" stroke="#77797e"/><circle cx="10" cy="10" r="4" fill="#44474d"/><path d="M10 2v14" stroke="#33363b"/></svg></button>
                <button class="caret faded" aria-label="隐藏选项"><svg viewBox="0 0 8 8"><use href="#caret"/></svg></button>
                <button aria-label="编辑外观"><svg class="i20" viewBox="0 0 20 20"><circle cx="9" cy="9" r="8" fill="#3f6fc4"/><path d="M9 9L1 9a8 8 0 0 1 8-8z" fill="#c93636"/><path d="M9 9v8a8 8 0 0 1-8-8z" fill="#4a9c48"/><circle cx="9" cy="6" r="3" fill="#ffffff88"/><path d="M9 19l1-4 7-7 3 3-7 7z" fill="#dce4e9" stroke="#26495c"/></svg></button>
                <button aria-label="应用布景"><svg class="i20" viewBox="0 0 20 20"><path d="M0 12h20v7H0z" fill="#eee"/><path d="M1 12h3v3H1zM8 12h3v3H8zM15 12h3v3h-3zM4 15h4v4H4zM11 15h4v4h-4z" fill="#222"/><circle cx="10" cy="8" r="7.500" fill="#3f6fc4"/><path d="M10 8H2.500A7.500 7.500 0 0 1 10 .5z" fill="#c93636"/><path d="M10 8v7.500A7.500 7.500 0 0 1 2.500 8z" fill="#4a9c48"/><circle cx="10" cy="5" r="3" fill="#ffffff88"/></svg></button>
                <button class="caret faded" aria-label="布景选项"><svg viewBox="0 0 8 8"><use href="#caret"/></svg></button>
                <button aria-label="视图设定"><svg class="i20" viewBox="0 0 20 20"><path d="M1 2h18v12H1z" fill="#b9c1cc" stroke="#44474d" stroke-width="1.300"/><path d="M10 14v4M5 18.500h10" stroke="#44474d" stroke-width="2"/></svg></button>
                <button class="caret faded" aria-label="视图设定选项"><svg viewBox="0 0 8 8"><use href="#caret"/></svg></button>
                <div class="window-tools">
                    <button aria-label="收起"><svg class="i20" viewBox="0 0 20 20"><path d="M4 3h11v13H4zM12 3v13" fill="none" stroke="#737d8c"/><path d="M10 6v6l-4-3z" fill="#737d8c"/></svg></button>
                    <button aria-label="平铺"><svg class="i20" viewBox="0 0 20 20"><path d="M4 3h14v13H4z" fill="none" stroke="#737d8c"/></svg></button>
                </div>
            </div>
            <div class="crumbs">
                <button aria-label="装配体"><svg class="i20" viewBox="0 0 20 20"><path d="M1 6l7-3 9 4v6l-6 6-10-7z" fill="#c3c9d1" stroke="#5b6067"/><path d="M8 3l4-2 6 2v6l-5 2-5-2zM8 3l5 2 5-2M13 5v6" fill="#4e9abb" stroke="#26495c"/></svg></button>
                <button aria-label="零件"><svg class="i20" viewBox="0 0 20 20"><path d="M1 8l5-6 5 1v5l7 3v4l-6 4-11-8zM6 2v6l6 4 6-1M12 12v7" fill="#c9ced5" stroke="#5b6067"/></svg></button>
                <button aria-label="实体"><svg class="i20" viewBox="0 0 20 20"><path d="M3 4l8-3 6 3v11l-8 4-6-4zM3 4l6 4 8-4M9 8v11" fill="#d1d5db" stroke="#5b6067"/></svg></button>
                <button class="named"><svg class="i20" viewBox="0 0 20 20"><path d="M10 2l8-1v14l-8 2z" fill="#cfd4da" stroke="#5b6067"/><path d="M1 6l6-3 7 2v11l-6 3-7-3zM1 6l7 2 6-3M8 8v11" fill="#4e9abb" stroke="#26495c"/></svg>凸台-拉伸1</button>
                <button class="face" aria-label="面"><i></i></button>
            </div>
            <div class="sketch-ref">
                <svg class="i16" viewBox="0 0 16 16"><path d="M3 1h4v8h2V6l5 5-5 4v-3H3z" fill="#c2c9d4" stroke="#5c6676"/></svg>
                <button><svg class="i20" viewBox="0 0 20 20"><path d="M8 3h8M3 6v7q0 5 5 5h10" fill="none" stroke="#47708a" stroke-width="2"/><path d="M0 4h7M3.500 1v7M1 2l5 5M6 2L1 7" stroke="#47708a"/><path d="M6 8h12M6 13h12M9 5v11M14 5v11" stroke="#bdc4ce"/></svg>草图1</button>
            </div>
        </section>
    </main>

    <!-- Document tabs and status -->
    <div class="sheet-tabs">
        <button class="current">型</button>
        <button>3D 视图</button>
        <button class="study">运动算例 1</button>
    </div>
    <footer class="status">
        <span>remium 2016 x64 版</span>
        <span class="state">完全定义</span>
        <span class="mode">在编辑</span>
    </footer>

    <!-- Windows taskbar -->
    <div class="taskbar">
        <button class="short" aria-label="任务视图"><svg class="i20" viewBox="0 0 20 20"><path d="M3 5h9v10H3zM2 1v2h11V1M2 19v-2h11v2M17 3v14" fill="none" stroke="#fff" stroke-width="1.300"/><path d="M16 7h3v3h-3z" fill="#fff"/></svg></button>
        <button class="short" aria-label="SOLIDWORKS 2016"><svg class="i24"><use href="#sw"/></svg></button>
        <button class="open"><svg class="i24" viewBox="0 0 24 24"><circle cx="12" cy="12" r="11" fill="#58b0ee"/><path d="M18 16q-4 5-9 2c-5-4-3-12 3-12q6 0 6 6H6" fill="none" stroke="#fff" stroke-width="3"/></svg>【招聘信...</button>
        <button class="short" aria-label="应用"><svg class="i24" viewBox="0 0 24 24"><path d="M1 1h22v22H1z" fill="#1c86ee"/><path d="M13 1h10v9z" fill="#eeb649"/><path d="M4 5h6v4H4zM4 11h6v8H4zM13 9h6v3h-6zM13 14h6v5h-6z" fill="#fff"/></svg></button>
        <button class="open"><svg class="i24" viewBox="0 0 24 24"><path d="M5 2h10v20H5z" fill="#f2cf69"/><path d="M8 2h9v14h-4v7l-8-1z" fill="#fbe394"/></svg>亚龙设计库</button>
        <button class="open"><svg class="i24" viewBox="0 0 24 24"><path d="M17 0l6 3v18l-6 3L7 14l-4 4-2-1V7l2-1 4 4zM17 7l-6 5 6 5zM3 9v6l3-3z" fill="#6d3396" stroke="#e8dcf2" fill-rule="evenodd"/></svg>library (...</button>
        <button class="open active"><svg class="i24"><use href="#sw"/></svg>SOLIDW...</button>
        <button class="open"><svg class="i24"><use href="#camera"/></svg>屏幕录像</button>
        <button class="open"><svg class="i24"><use href="#camera"/></svg>Recordin...</button>
        <button class="open"><svg class="i24"><use href="#blocks"/></svg>亚龙公司...</button>
        <button class="open"><svg class="i24"><use href="#blocks"/></svg>亚龙公司...</button>
        <button class="open"><svg class="i24"><use href="#blocks"/></svg>螺栓副</button>
        <button class="open hover"><svg class="i24"><use href="#blocks"/></svg>4.8级螺栓...</button>
        <button class="weather"><svg class="i24"><use href="#cloud"/></svg>36°C</button>
        <div class="tray">
            <button class="weather"><svg class="i24"><use href="#cloud"/></svg>36°C</button>
            <button aria-label="显示隐藏的图标"><svg class="i16" viewBox="0 0 16 16"><path d="M2 11l6-6 6 6" fill="none" stroke="#fff" stroke-width="1.300"/></svg></button>
            <button aria-label="微信"><svg class="i16" viewBox="0 0 16 16"><ellipse cx="6" cy="6" rx="6" ry="5" fill="#3ecb5b"/><ellipse cx="11" cy="10" rx="5" ry="4.500" fill="#e6ebe8"/><path d="M4 5h1M8 5h1" stroke="#174"/></svg></button>
            <button aria-label="安全防护"><svg class="i16" viewBox="0 0 16 16"><path d="M1 2q7-3 14 0 0 9-7 13Q1 10 1 2z" fill="#2f76c8" stroke="#dcebf8"/><path d="M3 4l9 1-5 5z" fill="#fff"/><circle cx="11" cy="11" r="4" fill="#35b34a"/></svg></button>
            <button aria-label="更新"><svg class="i16" viewBox="0 0 16 16"><path d="M1 3l13-2v11L1 15z" fill="none" stroke="#fff"/><path d="M5 8q0-3 3-3h2M8 10H5" fill="none" stroke="#fff" stroke-width="1.500"/><circle cx="12" cy="13" r="3" fill="#f08c17"/></svg></button>
            <button aria-label="翻译"><svg class="i16" viewBox="0 0 16 16"><circle cx="8" cy="7" r="7" fill="#2194e2"/><text x="3" y="11" font-size="9" fill="#fff">译</text><path d="M12 14l3-3" stroke="#e55"/></svg></button>
            <button aria-label="网络"><svg class="i16" viewBox="0 0 16 16"><path d="M2 14Q3 3 14 2M5 15Q5 6 14 5M9 15Q9 9 14 8" fill="none" stroke="#d0d5dd" stroke-width="1.300"/><circle cx="13" cy="14" r="1.500" fill="#fff"/></svg></button>
            <button aria-label="云盘"><svg class="i16" viewBox="0 0 16 16"><circle cx="10" cy="4" r="4" fill="#83c6f6"/><circle cx="11" cy="11" r="5" fill="#4797de"/><circle cx="6" cy="8" r="5.500" fill="#f5c93c"/></svg></button>
            <button aria-label="音量"><svg class="i16" viewBox="0 0 16 16"><path d="M1 6h2l4-4v12l-4-4H1z" fill="none" stroke="#fff"/><path d="M9 6q2 2 0 4M11 4q4 4 0 8" fill="none" stroke="#fff"/><path d="M13 2q5 6 0 12" fill="none" stroke="#8993a3"/></svg></button>
            <button class="lang">中</button>
            <button aria-label="搜狗输入法"><svg class="i16"><use href="#sogou"/></svg></button>
            <div class="clock">下午 04:24<br>2022/8/19</div>
        </div>
    </div>

    <!-- Floating desktop widgets -->
    <svg class="recorder" viewBox="0 0 60 11" aria-hidden="true"><path d="M0 0h60v7q0 4-4 4H4q-4 0-4-4z" fill="#4a4f62"/><path d="M7 4h20" stroke="#8fe0c5" stroke-width="5" stroke-dasharray="1 1"/><path d="M27 4h26" stroke="#232838" stroke-width="5" stroke-dasharray="1 1"/></svg>
    <svg class="bird" viewBox="0 0 50 56" aria-hidden="true"><path d="M21 1q4-2 8 0l17 10q4 2 4 6v22q0 4-4 6L29 55q-4 2-8 0L4 45q-4-2-4-6V17q0-4 4-6z" fill="#3f86f5"/><path d="M22 4q3-2 6 0l16 9q3 2 3 5v20q0 3-3 5l-16 9q-3 2-6 0L6 43q-3-2-3-5V18q0-3 3-5z" fill="#4b8df8" stroke="#7eaefb"/><path d="M3 17L25 28 47 17M25 28v24" stroke="#3d7de8" fill="none"/><path d="M7 17q5 0 8 3 2-4 7 0 4 4 6 1 4-7 13-10 0 10-6 19l7 8-10-1q2 3 0 6-1 2 1 6-6-4-9-9-6-3-6-10c0-6-4-6-5-9z" fill="#fff"/></svg>
    <button class="upload"><svg viewBox="0 0 30 24"><path d="M0 0h30v24H0z" fill="#2aa3f5"/><g fill="none" stroke="#fff" stroke-width="3"><circle cx="15" cy="9" r="4"/><circle cx="10" cy="15" r="3.500"/><circle cx="20" cy="15" r="3.500"/></g></svg><span>拖拽上传</span></button>
    <div class="ime">
        <svg class="ime-logo"><use href="#sogou"/></svg>
        <b>中</b>
        <svg class="i16" viewBox="0 0 16 16"><circle cx="4" cy="5" r="2" fill="none" stroke="#2174c0" stroke-width="1.500"/><path d="M11 7h3v3q0 3-3 4v-1q1-1 1-2h-1z" fill="#2174c0"/></svg>
        <svg class="i16" viewBox="0 0 16 16"><circle cx="8" cy="8" r="7" fill="none" stroke="#2174c0" stroke-width="1.500"/><path d="M5 5v2M11 5v2M4 9q4 5 8 0" fill="none" stroke="#2174c0" stroke-width="1.500"/></svg>
        <svg class="i16" viewBox="0 0 16 16"><rect x="5" y="0" width="6" height="10" rx="3" fill="#2174c0"/><path d="M3 7q0 5 5 5t5-5M8 12v3M5 15h6" fill="none" stroke="#2174c0" stroke-width="1.500"/></svg>
        <svg class="i16" viewBox="0 0 16 16"><path d="M1 3h14v11H1z" fill="none" stroke="#2174c0" stroke-width="1.500"/><path d="M3 6h10M3 8.500h10" stroke="#2174c0" stroke-width="1.500" stroke-dasharray="1.500 1"/><path d="M4 11.500h8" stroke="#2174c0" stroke-width="1.500"/></svg>
    </div>
    <svg class="wand" viewBox="0 0 132 148" aria-hidden="true">
        <path d="M78 52l6 6L14 118 6 128z" fill="#e9c13d" stroke="#8b6a13"/>
        <path d="M79 57L14 120" stroke="#fbe78d" stroke-width="2"/>
        <path d="M122 3q2-2 5 1t2 6L86 55l-7-6z" fill="#25262b" stroke="#0d0d10"/>
        <path d="M84 50L104 29" stroke="#6b6c73" stroke-width="4"/>
        <path d="M4 126v17l4-4 3 7 3-2-3-6h6z" fill="#fff" stroke="#111"/>
    </svg>
</body>
</html>
```

FILE: styles.css
```css
/* CAD workspace layout */
* {
    box-sizing: border-box;
}

body {
    display: flex;
    flex-direction: column;
    position: relative;
    height: 100vh;
    margin: 0;
    overflow: hidden;
    background: #f8f7fb;
    color: #16171a;
    font-family: "Noto Sans", "Noto Sans CJK SC", sans-serif;
    font-size: 13px;
}

button {
    padding: 0;
    border: 0;
    background: none;
    color: inherit;
    font: inherit;
    white-space: nowrap;
}

small {
    font-size: 11px;
}

svg {
    display: block;
    flex: none;
}

.sprite {
    display: none;
}

.i16 {
    width: 16px;
    height: 16px;
}

.i20 {
    width: 20px;
    height: 20px;
}

.i24 {
    width: 22px;
    height: 24px;
}

.caret {
    display: flex;
    align-items: center;
    justify-content: center;
}

.caret svg {
    width: 7px;
    height: 7px;
}

.faded {
    opacity: 0.4;
}

.split {
    display: flex;
    height: 25px;
    border: 1px solid #7f8790;
    background: #fdfdfe;
}

.split .on {
    border-right: 1px solid #7f8790;
    background: #cbced4;
}

/* Title bar */
.title-bar {
    display: flex;
    align-items: center;
    height: 32px;
    border-bottom: 1px solid #77797f;
}

.logo {
    display: flex;
    align-items: flex-end;
    width: 59px;
    height: 31px;
    padding: 0 0 1px 1px;
    border-right: 1px solid #77797f;
    background: linear-gradient(#fafafa, #d9d9db);
    color: #d63a44;
    font-size: 16px;
    font-style: italic;
}

.menu {
    display: flex;
    align-items: center;
    gap: 16px;
    width: 444px;
    height: 32px;
    padding: 0 0 2px 27px;
    border-right: 1px solid #77797f;
    border-bottom: 1px solid #111;
}

.pin {
    padding-left: 6px;
}

.quick {
    display: flex;
    align-items: center;
    padding-left: 16px;
}

.quick .caret {
    width: 19px;
    height: 24px;
}

.quick .split {
    margin: 0 2px 0 -4px;
}

.quick .split .on {
    padding: 0 2px;
}

.quick .split .caret {
    width: 14px;
    height: 23px;
}

.spaced {
    margin-right: 6px;
}

.doc-name {
    flex: 1;
    padding: 0 5px 2px 0;
    text-align: center;
}

.search {
    display: flex;
    align-items: center;
    gap: 5px;
    width: 202px;
    height: 22px;
    margin-right: 12px;
    padding: 0 2px 0 5px;
    border: 1px solid #c3c2c8;
}

.search input {
    flex: 1;
    min-width: 0;
    height: 18px;
    padding: 0 0 2px;
    border: 0;
    background: #eeedf1;
    font: inherit;
}

.search input::placeholder {
    color: #666970;
}

.help {
    width: 13px;
    color: #5b5d63;
    font-size: 15px;
    font-weight: 700;
}

/* Filter toolbar */
.filter-bar {
    display: flex;
    height: 32px;
    border-bottom: 1px solid #77797f;
}

.macro,
.filters {
    display: flex;
    align-items: center;
    padding-bottom: 2px;
    border-right: 1px solid #77797f;
}

.macro {
    gap: 7px;
    width: 61px;
    padding-left: 2px;
}

.filters {
    width: 884px;
}

.filters > button {
    flex: none;
    width: 27px;
    padding-left: 4px;
}

.grip {
    width: 13px;
    height: 26px;
    background: radial-gradient(circle, #85878d 1px, transparent 1px) 2px 0 / 4px 4px repeat-y;
}

.filters .on {
    width: 28px;
    padding-left: 3px;
}

.filters .split .caret {
    width: 14px;
}

.divider {
    width: 1px;
    height: 22px;
    margin: 0 3px 0 4px;
    background: #77797f;
}

/* Ribbon */
.ribbon {
    display: flex;
    height: 82px;
    padding-left: 3px;
    border-bottom: 1px solid #77797f;
}

.group {
    display: flex;
    align-items: flex-start;
    height: 80px;
    padding: 14px 1px 0;
    border-right: 1px solid #c4c3c9;
}

.group:last-child {
    border: 0;
}

.group button {
    display: flex;
    flex-direction: column;
    align-items: center;
    padding: 0 5px;
    line-height: 13px;
    text-align: center;
}

.group svg {
    margin-bottom: 2px;
}

.group small {
    line-height: 13px;
}

/* Workspace */
.workspace {
    display: flex;
    flex: 1;
    min-height: 0;
    background: linear-gradient(#8797ac, #9ea6b9 45%, #bbc1ce 88%, #c2c6d1);
}

.side {
    display: flex;
    flex-direction: column;
    width: 379px;
    z-index: 1;
}

.tabs {
    display: flex;
    height: 22px;
    width: max-content;
}

.tabs button {
    width: 56px;
    padding-bottom: 2px;
    border-right: 1px solid #85878c;
    border-bottom: 1px solid #85878c;
    background: #d6d4d8;
    line-height: 19px;
}

.tabs .cut {
    width: 16px;
}

.tabs .long {
    width: 117px;
}

.tabs .current {
    border: 0;
    background: #f8f7fb;
    color: #4f5156;
}

.panel {
    flex: 1;
    border-right: 1px solid #85878c;
    background: #f8f7fb;
}

.handle {
    display: flex;
    align-items: center;
    justify-content: center;
    height: 16px;
    margin: 2px 3px 0 0;
    padding-right: 96px;
    border-top: 1px solid #bdbcc2;
    border-bottom: 1px solid #bdbcc2;
}

.handle i {
    width: 6px;
    height: 6px;
    border: 1px solid #96989d;
    border-radius: 50%;
    background: #d0d0d4;
}

.panel-tabs {
    display: flex;
    height: 31px;
    margin-right: 3px;
    padding-top: 4px;
    border-bottom: 1px solid #a2a3a8;
}

.panel-tabs button {
    display: flex;
    align-items: center;
    justify-content: center;
    width: 40px;
    border: solid #8f9095;
    border-width: 1px 1px 0 0;
    background: #dad8dc;
}

.panel-tabs .cut {
    justify-content: flex-start;
    width: 24px;
}

.panel-tabs .more {
    width: 16px;
    margin-left: auto;
    border: 0;
    background: none;
}

.more svg {
    width: 8px;
    height: 12px;
}

.filter-box {
    display: block;
    width: calc(100% - 3px);
    height: 25px;
    border: 1px solid #b3b2b8;
    border-left: 0;
    background: none;
}

.tree {
    margin: 0 2px 0 0;
    padding: 1px 0 0;
    border-bottom: 3px solid #1d5a9c;
    line-height: 22px;
    list-style: none;
    white-space: nowrap;
}

.tree li {
    height: 22px;
}

.selected {
    display: inline-block;
    height: 22px;
    padding-right: 2px;
    border: 1px solid #4e84b8;
    border-left: 0;
    background: #a3c8e8;
    line-height: 20px;
    vertical-align: top;
}

/* Graphics area */
.view {
    position: relative;
    flex: 1;
}

.scene {
    position: absolute;
    inset: 0;
    width: 100%;
    height: 100%;
}

.axis {
    font-family: "Liberation Serif", serif;
    font-size: 10px;
    font-weight: 700;
}

.splitter {
    position: absolute;
    top: 410px;
    left: 0;
    width: 8px;
    height: 39px;
    border: 1px solid #9a9ca2;
    background: radial-gradient(circle, #9a9ca2 2px, #f8f7fb 3px);
}

.view-bar {
    display: flex;
    position: relative;
    align-items: center;
    height: 30px;
    padding-left: calc(40% + 3px);
}

.view-bar button {
    padding: 0 3px;
}

.view-bar .caret {
    width: 14px;
}

.window-tools {
    display: flex;
    margin: 0 -11px 0 auto;
}

.crumbs {
    display: flex;
    position: relative;
    width: max-content;
    height: 23px;
    margin: 9px 0 0 16px;
    background: #c3cbd7;
    font-size: 11px;
}

.crumbs button {
    display: flex;
    position: relative;
    align-items: center;
    width: 32px;
    padding-left: 12px;
}

/* Chevron between breadcrumb steps */
.crumbs button + button:not(.face)::before {
    content: "";
    position: absolute;
    top: 3px;
    left: -9px;
    width: 16px;
    height: 16px;
    border: solid #d9dfe7;
    border-width: 1px 1px 0 0;
    transform: rotate(45deg);
}

.crumbs .named {
    gap: 5px;
    width: 100px;
}

.crumbs .face {
    width: 43px;
    padding-left: 15px;
    background: #8fb3d2;
    clip-path: polygon(0 0, 100% 0, 100% 100%, 0 100%, 9px 50%);
}

.face i {
    width: 14px;
    height: 15px;
    border: 1px solid #2e6482;
    background: #4e94b8;
}

.sketch-ref {
    display: flex;
    position: relative;
    align-items: center;
    gap: 3px;
    margin: 6px 0 0 168px;
    font-size: 11px;
}

.sketch-ref button {
    display: flex;
    align-items: center;
    gap: 6px;
    height: 23px;
    padding: 0 4px 0 2px;
    background: #cfd4dd;
}

/* Bottom tabs and status line */
.sheet-tabs {
    display: flex;
    height: 16px;
    border-top: 1px solid #77797f;
    border-bottom: 1px solid #77797f;
    font-size: 12px;
    line-height: 12px;
}

.sheet-tabs button {
    width: 58px;
    padding-bottom: 2px;
    border-right: 1px solid #85878c;
    background: #d6d4d8;
}

.sheet-tabs .current {
    width: 19px;
    background: none;
    text-align: left;
}

.sheet-tabs .study {
    width: 84px;
    padding-right: 8px;
}

.status {
    display: flex;
    height: 18px;
    padding-right: 140px;
    font-size: 12px;
    line-height: 20px;
}

.state {
    margin-left: auto;
    padding-right: 7px;
    border-right: 1px solid #d2d1d6;
}

.mode {
    margin-left: 6px;
    padding-left: 4px;
    border-left: 1px solid #d2d1d6;
}

/* Taskbar */
.taskbar {
    display: flex;
    height: 40px;
    background: linear-gradient(90deg, #22373f, #20323f 50%, #1c2b40 75%, #1a2543);
    color: #fff;
    font-size: 12px;
}

.short {
    display: flex;
    align-items: center;
    justify-content: center;
    width: 48px;
}

.open + .short {
    width: 44px;
}

.open {
    display: flex;
    align-items: center;
    gap: 6px;
    width: 105px;
    padding-left: 7px;
    background: linear-gradient(#7ab4e6, #7ab4e6) center bottom / calc(100% - 8px) 2px no-repeat;
}

.active {
    background-color: #4b5f67;
    background-size: 100% 2px;
}

.hover {
    background-color: #33434f;
    background-size: 100% 2px;
}

.weather {
    display: flex;
    align-items: center;
    gap: 8px;
    padding-left: 20px;
    font-size: 15px;
}

.weather svg {
    height: 20px;
}

.tray {
    display: flex;
    align-items: center;
    gap: 8px;
    margin-left: auto;
}

.tray .weather {
    padding: 0 6px 0 0;
}

.lang {
    width: 16px;
    font-size: 13px;
}

.clock {
    width: 93px;
    padding-bottom: 2px;
    line-height: 19px;
    text-align: center;
}

/* Floating widgets */
.recorder {
    position: absolute;
    top: 0;
    left: 1084px;
    width: 60px;
    height: 11px;
}

.bird {
    position: absolute;
    top: 10px;
    right: 328px;
    width: 50px;
    height: 56px;
}

.upload {
    display: flex;
    position: absolute;
    top: 28px;
    right: 11px;
    width: 104px;
    height: 25px;
    overflow: hidden;
    border: 1px solid #2f8fd0;
    border-radius: 4px;
    background: linear-gradient(#e2f6fe, #bfeafc);
    color: #3aa0df;
    font-size: 12px;
    line-height: 23px;
}

.upload svg {
    width: 29px;
    height: 23px;
}

.upload span {
    flex: 1;
}

.ime {
    display: flex;
    position: absolute;
    right: 0;
    bottom: 40px;
    align-items: center;
    justify-content: space-between;
    width: 142px;
    height: 24px;
    padding-right: 5px;
    background: #fbfbfd;
    color: #2174c0;
    font-size: 15px;
}

.ime-logo {
    width: 28px;
    height: 28px;
}

.wand {
    position: absolute;
    right: 436px;
    bottom: -4px;
    width: 132px;
    height: 148px;
}
```
